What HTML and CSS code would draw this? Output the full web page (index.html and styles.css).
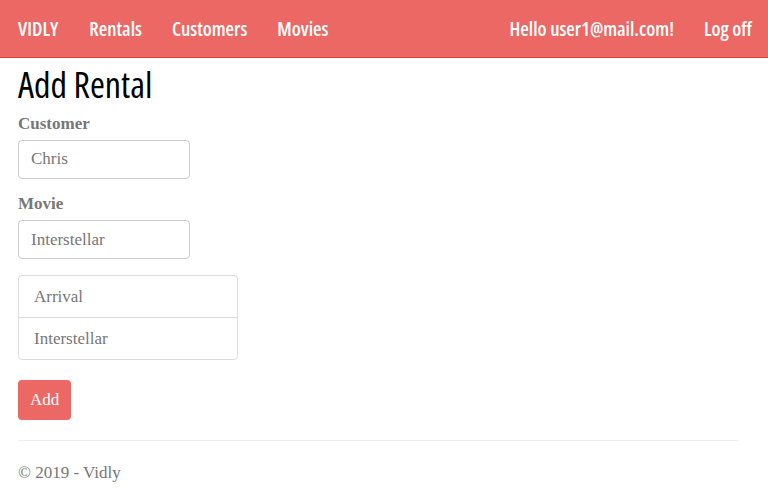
FILE: index.html
```html
<!DOCTYPE html>
<html>
<head>
<meta charset="utf-8">
<link rel="stylesheet" href="styles.css">
</head>
<body>
<nav class="navbar">
  <div class="nav-left">
    <a class="brand">VIDLY</a>
    <a class="nav-link">Rentals</a>
    <a class="nav-link">Customers</a>
    <a class="nav-link">Movies</a>
  </div>
  <div class="nav-right">
    <a class="nav-link">Hello user1@mail.com!</a>
    <a class="nav-link">Log off</a>
  </div>
</nav>
<main class="container">
  <h2 class="title">Add Rental</h2>
  <div class="form-group">
    <label class="label">Customer</label>
    <div class="input">Chris</div>
  </div>
  <div class="form-group">
    <label class="label">Movie</label>
    <div class="input">Interstellar</div>
  </div>
  <ul class="list-group">
    <li class="list-item">Arrival</li>
    <li class="list-item">Interstellar</li>
  </ul>
  <button class="btn">Add</button>
  <hr class="rule">
  <footer class="footer">© 2019 - Vidly</footer>
</main>
</body>
</html>
```
FILE: styles.css
```css
* { box-sizing: border-box; }
html, body { margin: 0; padding: 0; background: #fff; }
body {
  font-family: "Liberation Serif", serif;
  font-size: 17px;
  color: #777;
}
.navbar {
  height: 58px;
  background: #eb6864;
  border-bottom: 1px solid #e53c37;
  display: flex;
  justify-content: space-between;
  align-items: center;
  padding: 0 0 1px 18px;
  font-family: "Open Sans", sans-serif;
  font-stretch: 75%;
  font-size: 19.5px;
  font-weight: 600;
  color: #fff;
}
.nav-left, .nav-right { display: flex; align-items: center; }
.brand { margin-right: 16px; }
.nav-link { padding: 0 15px; }
.nav-right .nav-link:last-child { padding-right: 16px; }
.container { padding: 0 30px 0 18px; }
.title {
  font-family: "Open Sans", sans-serif;
  font-stretch: 75%;
  font-weight: 400;
  font-size: 36px;
  color: #000;
  margin: 7px 0 9px;
  line-height: 1.1;
}
.form-group { margin-bottom: 15px; }
.label { display: block; font-weight: bold; margin-bottom: 6px; line-height: 1.2; }
.input {
  width: 172px;
  height: 39px;
  border: 1px solid #ccc;
  border-radius: 4px;
  padding: 0 12px;
  display: flex;
  align-items: center;
  color: #777;
}
.list-group {
  list-style: none;
  margin: 16px 0 20px;
  padding: 0;
  width: 220px;
  border: 1px solid #ddd;
  border-radius: 4px;
}
.list-item {
  height: 41px;
  display: flex;
  align-items: center;
  padding: 0 15px;
}
.list-item + .list-item { border-top: 1px solid #ddd; height: 42px; }
.btn {
  background: #eb6864;
  color: #fff;
  border: 0;
  border-radius: 4px;
  font-family: inherit;
  font-size: 17px;
  height: 40px;
  padding: 0 12px;
  display: block;
}
.rule { border: 0; border-top: 1px solid #eee; margin: 20px 0 20px; }
.footer { line-height: 1.4; }
```
